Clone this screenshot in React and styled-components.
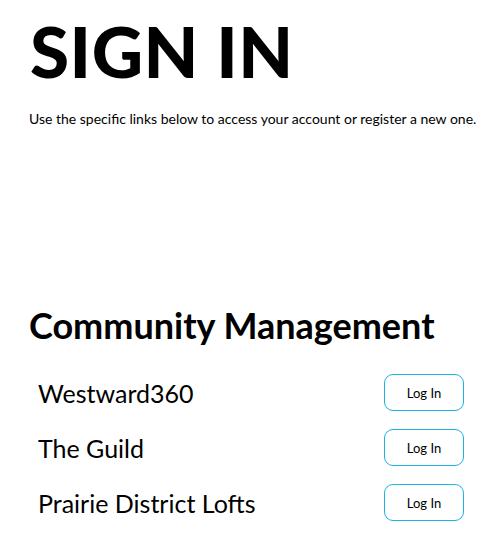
import styled, { createGlobalStyle } from "styled-components";

const GlobalStyle = createGlobalStyle`
  html, body {
    margin: 0;
    padding: 0;
    background: #fff;
  }
  body {
    font-family: Lato, "Noto Sans", sans-serif;
    color: #000;
  }
`;

const communities = ["Westward360", "The Guild", "Prairie District Lofts"];

export default function App() {
  return (
    <>
      <GlobalStyle />
      <Page>
        <Title>SIGN IN</Title>
        <Intro>
          Use the specific links below to access your account or register a new one.
        </Intro>

        <Section>
          <SectionTitle>Community Management</SectionTitle>
          <List>
            {communities.map((name) => (
              <Row key={name}>
                <Name>{name}</Name>
                <LoginButton>Log In</LoginButton>
              </Row>
            ))}
          </List>
        </Section>
      </Page>
    </>
  );
}

const Page = styled.div`
  padding: 11px 31px 0 29px;
  display: flex;
  flex-direction: column;
`;

const Title = styled.h1`
  margin: 0;
  font-family: Lato, sans-serif;
  font-weight: 900;
  font-size: 71px;
  line-height: 80px;
  letter-spacing: 0.5px;
  padding-left: 1px;
`;

const Intro = styled.p`
  margin: 19px 0 0;
  font-size: 14px;
  line-height: 17px;
  white-space: nowrap;
`;

const Section = styled.section`
  margin-top: 176px;
  display: flex;
  flex-direction: column;
`;

const SectionTitle = styled.h2`
  margin: 0;
  font-size: 36px;
  font-weight: 700;
  line-height: 44px;
`;

const List = styled.div`
  margin-top: 27px;
  display: flex;
  flex-direction: column;
  gap: 18px;
`;

const Row = styled.div`
  display: flex;
  align-items: center;
  justify-content: space-between;
  padding-left: 9px;
`;

const Name = styled.span`
  font-size: 25px;
`;

const LoginButton = styled.button`
  width: 80px;
  height: 37px;
  border: 1px solid #1ab4ea;
  border-radius: 9px;
  background: #fff;
  font-family: Lato, sans-serif;
  font-size: 13px;
  color: #000;
  cursor: pointer;
`;
